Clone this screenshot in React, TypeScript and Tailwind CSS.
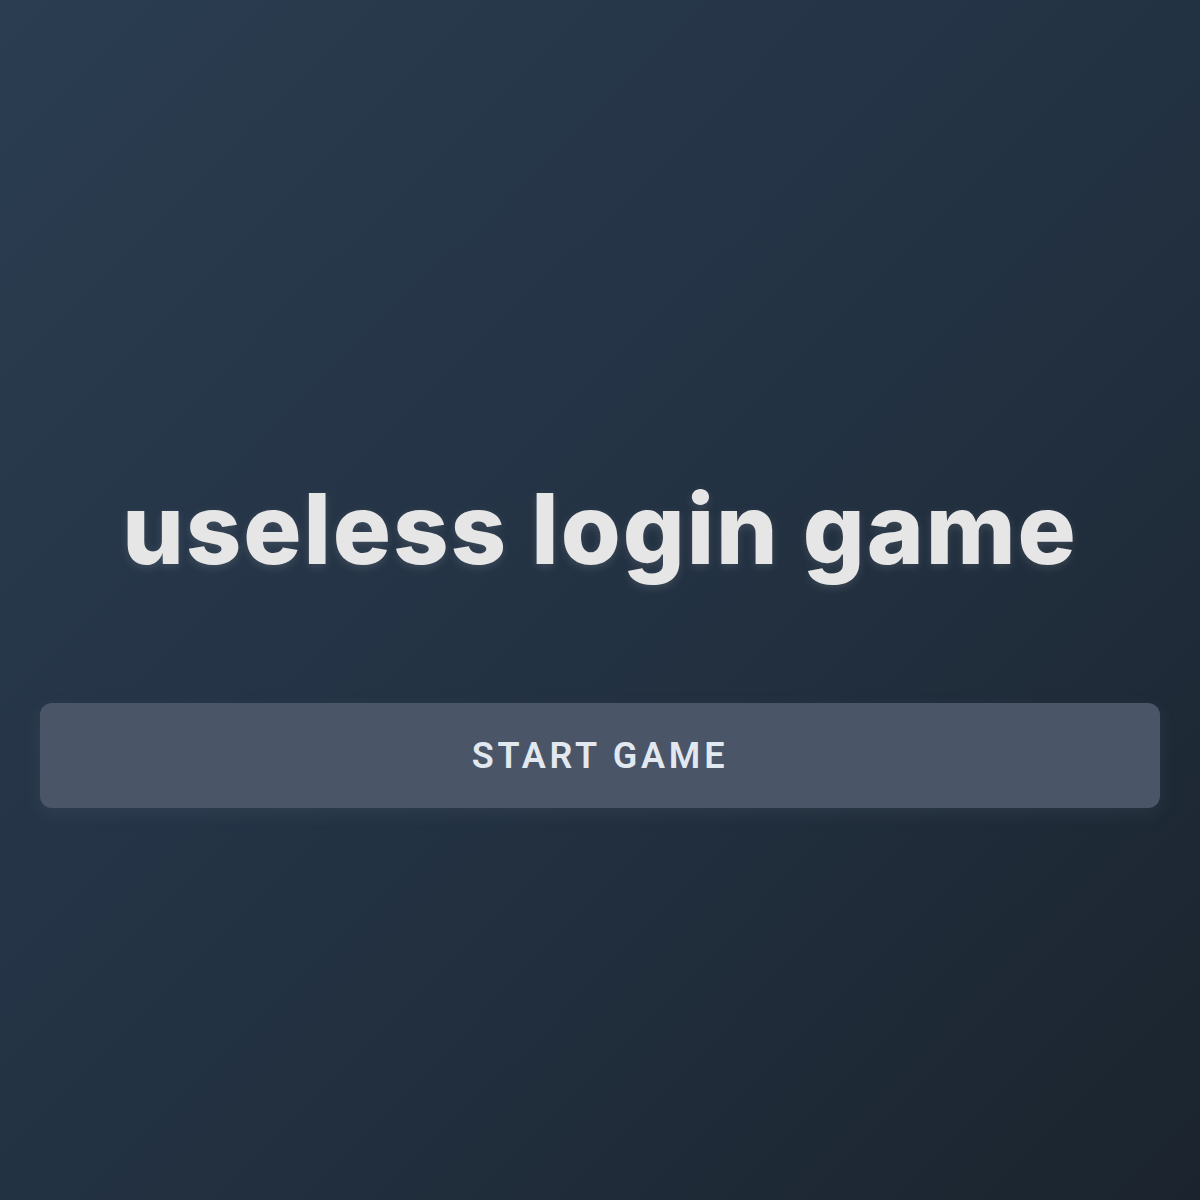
export default function App() {
  return (
    <div className="min-h-screen w-full bg-gradient-to-br from-[#2b3d51] via-[#233243] to-[#1b242e] px-10 pt-[480px]">
      <div className="flex flex-col items-center">
        <h1 className="text-[97px] font-extrabold leading-none tracking-[0.02em] text-[#e6e6e6] [font-family:Inter,'Noto_Sans',sans-serif] [text-shadow:0_3px_10px_rgba(255,255,255,0.12)]">
          useless login game
        </h1>
        <button className="mt-[126px] h-[105px] w-full rounded-xl bg-[#4a5568] text-[36px] font-semibold uppercase tracking-[0.105em] text-[#e2e8f0] shadow-[0_6px_18px_rgba(120,140,160,0.12)] [font-family:Roboto,'Liberation_Sans',sans-serif]">
          Start Game
        </button>
      </div>
    </div>
  );
}
